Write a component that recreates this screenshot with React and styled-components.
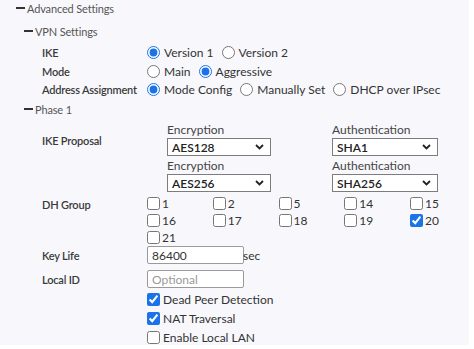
import React from 'react';
import styled, { createGlobalStyle } from 'styled-components';

const GlobalStyle = createGlobalStyle`
  html, body {
    margin: 0;
    padding: 0;
    background: #ffffff;
  }
  body {
    font-family: Lato, "Open Sans", sans-serif;
    font-size: 12px;
    color: #333;
  }
`;

const Panel = styled.div`
  width: 469px;
  height: 345px;
  background: #f8f8fc;
  box-sizing: border-box;
  overflow: hidden;
`;

const Heading = styled.div`
  display: flex;
  align-items: center;
  height: 16px;
  margin-top: ${p => p.top}px;
  padding-left: ${p => p.indent}px;
  color: #555;
  font-size: 11px;
  letter-spacing: -0.15px;
`;

const Dash = styled.span`
  display: inline-block;
  width: 9px;
  height: 2px;
  background: #333;
  margin-right: 2px;
`;

const Row = styled.div`
  display: flex;
  align-items: ${p => p.align || 'center'};
  min-height: ${p => p.h || 18}px;
  margin-top: ${p => p.top || 0}px;
  padding-left: 42px;
`;

const Label = styled.div`
  width: 105px;
  flex-shrink: 0;
  font-weight: 600;
  font-size: 11px;
  letter-spacing: -0.2px;
  white-space: nowrap;
  color: #3a3a3a;
  padding-top: ${p => p.pad || 0}px;
`;

const Options = styled.div`
  display: flex;
  align-items: center;
  gap: 8px;
`;

const Option = styled.label`
  display: flex;
  align-items: center;
  gap: ${p => p.gap || 3}px;
  color: #333;
  white-space: nowrap;
`;

const Radio = styled.input.attrs({ type: 'radio' })`
  margin: 0;
  width: 13px;
  height: 13px;
  accent-color: #1a73e8;
`;

const Check = styled.input.attrs({ type: 'checkbox' })`
  margin: 0;
  width: 13px;
  height: 13px;
  accent-color: #1a73e8;
`;

const Proposal = styled.div`
  display: grid;
  grid-template-columns: 104px 106px;
  column-gap: 61px;
  padding-left: 20px;
`;

const Field = styled.div`
  display: flex;
  flex-direction: column;
  margin-top: ${p => p.top || 0}px;
`;

const FieldLabel = styled.div`
  height: 14px;
  line-height: 14px;
  color: #444;
  margin-bottom: 1px;
`;

const Select = styled.div`
  display: flex;
  align-items: center;
  justify-content: space-between;
  height: 18px;
  box-sizing: border-box;
  border: 1px solid #7d7d7d;
  background: #fff;
  padding: 0 6px 0 4px;
  color: #222;
  font-weight: 600;
`;

const DhGrid = styled.div`
  display: grid;
  grid-template-columns: repeat(5, 65.75px);
  grid-auto-rows: 17px;
  align-items: center;
`;

const TextInput = styled.input`
  width: 97px;
  height: 18px;
  box-sizing: border-box;
  border: 1px solid #9a9a9a;
  border-radius: 2px;
  background: #fff;
  font-family: Lato, sans-serif;
  font-size: 12px;
  color: #333;
  padding: 0 4px;
  margin: 0;
  &::placeholder {
    color: #9a9a9a;
  }
`;

const Unit = styled.span`
  color: #333;
  margin-left: -1px;
`;

const Chevron = () => (
  <svg width="9" height="6" viewBox="0 0 9 6">
    <path d="M1 1l3.5 3.5L8 1" fill="none" stroke="#222" strokeWidth="1.8" />
  </svg>
);

const SelectBox = ({ value }) => (
  <Select>
    <span>{value}</span>
    <Chevron />
  </Select>
);

const dh = [
  ['1', false], ['2', false], ['5', false], ['14', false], ['15', false],
  ['16', false], ['17', false], ['18', false], ['19', false], ['20', true],
  ['21', false],
];

export default function App() {
  return (
    <>
      <GlobalStyle />
      <Panel>
        <Heading top={0} indent={16}><Dash />Advanced Settings</Heading>
        <Heading top={7} indent={24}><Dash />VPN Settings</Heading>

        <Row top={4}>
          <Label>IKE</Label>
          <Options>
            <Option gap={4}><Radio name="ike" defaultChecked />Version 1</Option>
            <Option gap={4}><Radio name="ike" />Version 2</Option>
          </Options>
        </Row>
        <Row top={1}>
          <Label>Mode</Label>
          <Options>
            <Option gap={4}><Radio name="mode" />Main</Option>
            <Option gap={4}><Radio name="mode" defaultChecked />Aggressive</Option>
          </Options>
        </Row>
        <Row top={0}>
          <Label>Address Assignment</Label>
          <Options>
            <Option gap={4}><Radio name="addr" defaultChecked />Mode Config</Option>
            <Option gap={4}><Radio name="addr" />Manually Set</Option>
            <Option gap={4}><Radio name="addr" />DHCP over IPsec</Option>
          </Options>
        </Row>

        <Heading top={3} indent={24}><Dash />Phase 1</Heading>

        <Row top={6} align="flex-start">
          <Label pad={11}>IKE Proposal</Label>
          <Proposal>
            <Field>
              <FieldLabel>Encryption</FieldLabel>
              <SelectBox value="AES128" />
            </Field>
            <Field>
              <FieldLabel>Authentication</FieldLabel>
              <SelectBox value="SHA1" />
            </Field>
            <Field top={3}>
              <FieldLabel>Encryption</FieldLabel>
              <SelectBox value="AES256" />
            </Field>
            <Field top={3}>
              <FieldLabel>Authentication</FieldLabel>
              <SelectBox value="SHA256" />
            </Field>
          </Proposal>
        </Row>

        <Row top={3} align="flex-start">
          <Label pad={3}>DH Group</Label>
          <DhGrid>
            {dh.map(([n, on]) => (
              <Option key={n} gap={2}><Check defaultChecked={on} />{n}</Option>
            ))}
          </DhGrid>
        </Row>

        <Row top={0}>
          <Label>Key Life</Label>
          <TextInput defaultValue="86400" />
          <Unit>sec</Unit>
        </Row>
        <Row top={6}>
          <Label>Local ID</Label>
          <TextInput placeholder="Optional" />
        </Row>

        <Row top={3} h={16}>
          <Label />
          <Option gap={3}><Check defaultChecked />Dead Peer Detection</Option>
        </Row>
        <Row top={3} h={16}>
          <Label />
          <Option gap={3}><Check defaultChecked />NAT Traversal</Option>
        </Row>
        <Row top={3} h={16}>
          <Label />
          <Option gap={3}><Check />Enable Local LAN</Option>
        </Row>
      </Panel>
    </>
  );
}
